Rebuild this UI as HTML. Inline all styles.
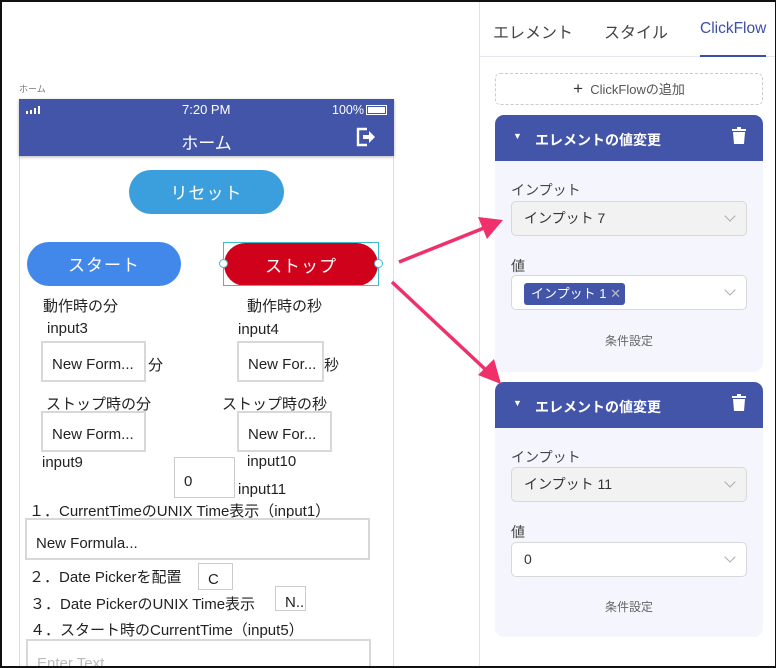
<!DOCTYPE html>
<html><head><meta charset="utf-8"><style>
*{box-sizing:border-box;margin:0;padding:0}
html,body{width:776px;height:668px;overflow:hidden}
body{background:#fff;font-family:"Liberation Sans","Noto Sans CJK JP",sans-serif;position:relative;color:#222}
.a{position:absolute;white-space:nowrap}
.frame{position:absolute;left:0;top:0;width:776px;height:668px;border:2px solid #111;border-right-width:1px;z-index:50;pointer-events:none}
.btn{position:absolute;border-radius:23px;color:#fff;font-size:17px;text-align:center;line-height:48px;height:44px;letter-spacing:1px}
.box{position:absolute;border:2px solid #d8d8d8;background:#fff;font-size:15px;padding-left:9px;white-space:nowrap;overflow:hidden}
.t{position:absolute;font-size:15px;white-space:nowrap;color:#222}
.card{position:absolute;left:495px;width:268px;background:#f5f5fd;border-radius:9px;overflow:hidden}
.ch{height:46px;background:#4355a9;color:#fff;font-weight:bold;font-size:14px;position:relative}
.lbl{position:absolute;left:16px;font-size:14px;color:#444}
.sel{position:absolute;left:16px;width:236px;height:35px;border:1px solid #d8d8d8;border-radius:5px;font-size:14px;color:#333;padding-left:12px;line-height:33px}
.chev{position:absolute;right:12px;top:10px;width:8px;height:8px;border-right:1px solid #aaa;border-bottom:1px solid #aaa;transform:rotate(45deg)}
.cond{position:absolute;left:0;width:268px;text-align:center;font-size:12px;color:#666}
</style></head><body>
<div class="frame"></div>
<div class="a" style="left:19px;top:82px;font-size:9px;color:#777">ホーム</div>
<div class="a" style="left:19px;top:99px;width:375px;height:580px;border:1px solid #ddd;background:#fff"></div>
<div class="a" style="left:19px;top:99px;width:375px;height:57px;background:#4355a9;box-shadow:0 1px 3px rgba(0,0,0,.3)">
 <div class="a" style="left:7px;top:7px;width:14px;height:8px">
  <span style="position:absolute;left:0;bottom:0;width:2px;height:3px;background:#fff"></span>
  <span style="position:absolute;left:4px;bottom:0;width:2px;height:4px;background:#fff"></span>
  <span style="position:absolute;left:8px;bottom:0;width:2px;height:6px;background:#fff"></span>
  <span style="position:absolute;left:12px;bottom:0;width:2px;height:8px;background:#fff"></span></div>
 <div class="a" style="left:163px;top:3px;color:#fff;font-size:13px">7:20 PM</div>
 <div class="a" style="left:313px;top:4px;color:#fff;font-size:12.5px">100%</div>
 <div class="a" style="left:347px;top:6px;width:21px;height:10px;border:1px solid #fff;padding:1px"><div style="width:100%;height:100%;background:#fff"></div></div>
 <div class="a" style="left:0;width:375px;top:30px;text-align:center;color:#fff;font-size:17px">ホーム</div>
 <svg class="a" style="left:337px;top:27px" width="20" height="22" viewBox="0 0 20 22"><path d="M11 3H2v16h9" fill="none" stroke="#fff" stroke-width="2.4"/><path d="M7 9h6V5l6 6-6 6v-4H7z" fill="#fff"/></svg>
</div>
<div class="btn" style="left:129px;top:170px;width:155px;background:#3a9fdc">リセット</div>
<div class="btn" style="left:27px;top:242px;width:154px;background:#4287ea">スタート</div>
<div class="btn" style="left:224px;top:243px;width:154px;height:43px;background:#d0021b">ストップ</div>
<div class="a" style="left:223px;top:242px;width:156px;height:44px;border:1px solid #3bbfd0"></div>
<div class="a" style="left:219px;top:259px;width:9px;height:9px;border-radius:50%;border:1.5px solid #3bbfd0;background:#fff"></div>
<div class="a" style="left:374px;top:259px;width:9px;height:9px;border-radius:50%;border:1.5px solid #3bbfd0;background:#fff"></div>
<div class="t" style="left:43px;top:295px">動作時の分</div>
<div class="t" style="left:247px;top:295px">動作時の秒</div>
<div class="t" style="left:47px;top:320px">input3</div>
<div class="t" style="left:238px;top:321px">input4</div>
<div class="box" style="left:41px;top:341px;width:105px;height:41px;line-height:43px">New Form...</div>
<div class="t" style="left:148px;top:354px">分</div>
<div class="box" style="left:237px;top:341px;width:87px;height:41px;line-height:43px">New For...</div>
<div class="t" style="left:324px;top:354px">秒</div>
<div class="t" style="left:46px;top:393px">ストップ時の分</div>
<div class="t" style="left:222px;top:393px">ストップ時の秒</div>
<div class="box" style="left:41px;top:411px;width:105px;height:41px;line-height:43px">New Form...</div>
<div class="box" style="left:237px;top:411px;width:95px;height:41px;line-height:43px">New For...</div>
<div class="t" style="left:42px;top:454px">input9</div>
<div class="t" style="left:247px;top:453px">input10</div>
<div class="box" style="left:174px;top:457px;width:61px;height:41px;line-height:47px;border-width:1px;border-color:#ccc">0</div>
<div class="t" style="left:238px;top:481px">input11</div>
<div class="t" style="left:29px;top:500px">１．CurrentTimeのUNIX Time表示（input1）</div>
<div class="box" style="left:25px;top:518px;width:345px;height:42px;line-height:48px">New Formula...</div>
<div class="t" style="left:29px;top:566px">２．Date Pickerを配置</div>
<div class="box" style="left:198px;top:563px;width:35px;height:27px;line-height:31px;border-width:1px;border-color:#ccc">C</div>
<div class="t" style="left:30px;top:593px">３．Date PickerのUNIX Time表示</div>
<div class="box" style="left:275px;top:586px;width:31px;height:25px;line-height:32px;border-width:1px;border-color:#ccc;padding-left:9px">N..</div>
<div class="t" style="left:30px;top:619px">４．スタート時のCurrentTime（input5）</div>
<div class="box" style="left:26px;top:639px;width:345px;height:40px;line-height:46px;color:#bbb">Enter Text</div>
<div class="a" style="left:479px;top:0;width:1px;height:668px;background:#e2e2e2"></div>
<div class="a" style="left:493px;top:19px;font-size:16px;color:#444">エレメント</div>
<div class="a" style="left:604px;top:19px;font-size:16px;color:#444">スタイル</div>
<div class="a" style="left:700px;top:20px;font-size:15.5px;color:#3b4fa6">ClickFlow</div>
<div class="a" style="left:480px;top:56px;width:296px;height:1px;background:#e6e6ee"></div>
<div class="a" style="left:700px;top:55px;width:66px;height:2px;background:#3b4fa6"></div>
<div class="a" style="left:495px;top:73px;width:268px;height:32px;border:1px dashed #ccc;border-radius:5px;text-align:center;line-height:30px;font-size:13px;color:#555"><b style="font-size:17px;color:#333;font-weight:normal">+</b>&nbsp; ClickFlowの追加</div>

<div class="card" style="top:115px;height:257px">
 <div class="ch"><span class="a" style="left:18px;top:16px;font-size:9px">▼</span><span class="a" style="left:40px;top:15px">エレメントの値変更</span>
 <svg class="a" style="left:237px;top:12px" width="14" height="17" viewBox="0 0 14 17"><path d="M0 2h14v2H0zM5 0h4v2H5zM1 5h12l-1 12H2z" fill="#fff"/></svg></div>
 <div class="lbl" style="top:65px">インプット</div>
 <div class="sel" style="top:86px;background:#f2f2f2">インプット 7<span class="chev"></span></div>
 <div class="lbl" style="top:141px">値</div>
 <div class="sel" style="top:160px;background:#fff"><span class="a" style="left:12px;top:7px;height:22px;width:101px;background:#4355a9;border-radius:3px;color:#fff;font-size:13px;line-height:22px;padding-left:7px">インプット 1 <span style="color:#bbc">✕</span></span><span class="chev"></span></div>
 <div class="cond" style="top:217px">条件設定</div>
</div>
<div class="card" style="top:382px;height:255px">
 <div class="ch"><span class="a" style="left:18px;top:16px;font-size:9px">▼</span><span class="a" style="left:40px;top:15px">エレメントの値変更</span>
 <svg class="a" style="left:237px;top:12px" width="14" height="17" viewBox="0 0 14 17"><path d="M0 2h14v2H0zM5 0h4v2H5zM1 5h12l-1 12H2z" fill="#fff"/></svg></div>
 <div class="lbl" style="top:65px">インプット</div>
 <div class="sel" style="top:85px;background:#f2f2f2">インプット 11<span class="chev"></span></div>
 <div class="lbl" style="top:140px">値</div>
 <div class="sel" style="top:160px;background:#fff">0<span class="chev"></span></div>
 <div class="cond" style="top:216px">条件設定</div>
</div>
<svg class="a" style="left:0;top:0;z-index:40" width="776" height="668">
 <line x1="399" y1="262" x2="484" y2="228" stroke="#f0306a" stroke-width="3.5"/>
 <polygon points="503,220 478,217 487,239" fill="#f0306a"/>
 <line x1="392" y1="282" x2="486" y2="370" stroke="#f0306a" stroke-width="3.5"/>
 <polygon points="501,384 478,375 494,359" fill="#f0306a"/>
</svg>
</body></html>
